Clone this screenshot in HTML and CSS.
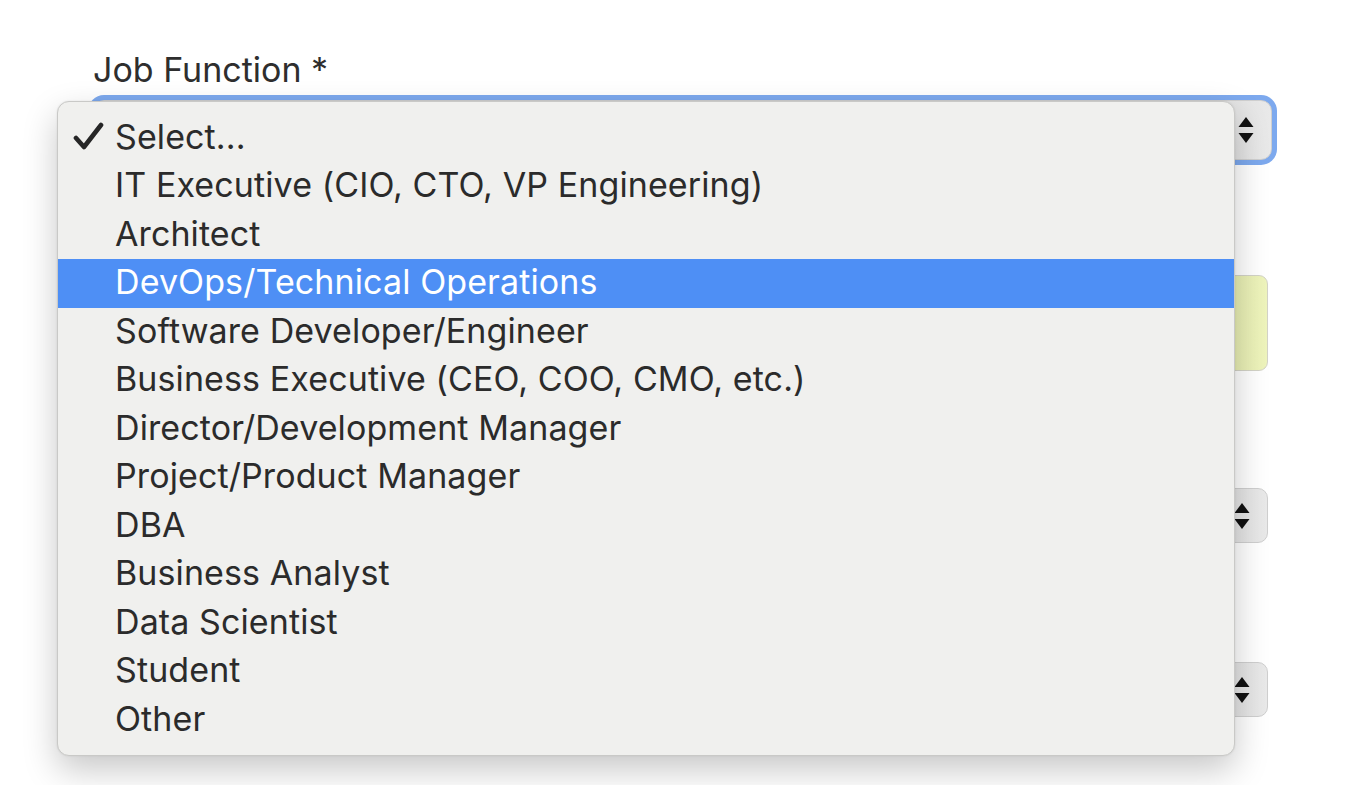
FILE: index.html
```html
<!DOCTYPE html>
<html lang="en">
<head>
<meta charset="utf-8">
<title>Job Function</title>
<link rel="stylesheet" href="styles.css">
</head>
<body>
<div class="page">
  <form class="form">
    <label class="label">Job Function *</label>
    <div class="focus-ring">
      <div class="select select-main"><span class="arrows"><svg width="16" height="28" viewBox="0 0 16 28"><polygon points="8,1 15.5,11 0.5,11" fill="#111"/><polygon points="0.5,17 15.5,17 8,27" fill="#111"/></svg></span></div>
    </div>
    <div class="input-yellow"></div>
    <div class="select select-small s1"><span class="arrows"><svg width="16" height="28" viewBox="0 0 16 28"><polygon points="8,1 15.5,11 0.5,11" fill="#111"/><polygon points="0.5,17 15.5,17 8,27" fill="#111"/></svg></span></div>
    <div class="select select-small s2"><span class="arrows"><svg width="16" height="28" viewBox="0 0 16 28"><polygon points="8,1 15.5,11 0.5,11" fill="#111"/><polygon points="0.5,17 15.5,17 8,27" fill="#111"/></svg></span></div>
    <p class="footnote">I would like to be kept informed about products and <a>events</a></p>
  </form>

  <ul class="menu">
    <li class="item checked"><svg class="check" width="32" height="32" viewBox="0 0 32 32"><polyline points="4,17 12,26 29,4" fill="none" stroke="#262626" stroke-width="4.6" stroke-linecap="round" stroke-linejoin="round"/></svg>Select...</li>
    <li class="item">IT Executive (CIO, CTO, VP Engineering)</li>
    <li class="item">Architect</li>
    <li class="item active">DevOps/Technical Operations</li>
    <li class="item">Software Developer/Engineer</li>
    <li class="item">Business Executive (CEO, COO, CMO, etc.)</li>
    <li class="item">Director/Development Manager</li>
    <li class="item">Project/Product Manager</li>
    <li class="item">DBA</li>
    <li class="item">Business Analyst</li>
    <li class="item">Data Scientist</li>
    <li class="item">Student</li>
    <li class="item">Other</li>
  </ul>
</div>
</body>
</html>
```

FILE: styles.css
```css
* { box-sizing: border-box; }
html, body {
  margin: 0;
  padding: 0;
  background: #ffffff;
  overflow: hidden;
}
body {
  width: 1358px;
  height: 785px;
  font-family: Inter, "Noto Sans", "Liberation Sans", sans-serif;
  color: #2a2a2a;
}
.page {
  position: relative;
  width: 1358px;
  height: 785px;
  overflow: hidden;
}
.form {
  display: flex;
  flex-direction: column;
  align-items: flex-start;
  padding: 50px 0 0 88px;
  width: 1277px;
}
.label {
  display: block;
  font-size: 34px;
  line-height: 40px;
  padding-left: 5px;
  color: #2e2e2e;
  margin-bottom: 5px;
}
.focus-ring {
  width: 1189px;
  height: 70px;
  padding: 5px;
  border-radius: 16px;
  background: #7da9ee;
}
.select {
  position: relative;
  border: 1.5px solid #cfcfcf;
  border-radius: 11px;
  background: linear-gradient(90deg, #f2f2f2 0%, #ececec 85%, #dedede 94%, #e9e9e9 100%);
}
.select-main {
  width: 100%;
  height: 100%;
}
.arrows {
  position: absolute;
  right: 17px;
  top: 50%;
  transform: translateY(-50%);
  display: flex;
}
.input-yellow {
  margin-top: 110px;
  width: 1180px;
  height: 96px;
  border: 1.5px solid #d3d3c7;
  border-radius: 9px;
  background: linear-gradient(90deg, #eef5b2 0%, #eef5b8 90%, #e6ecb0 96%, #eef4bc 100%);
}
.select-small {
  width: 1180px;
  height: 55px;
  border-radius: 10px;
}
.select-small .arrows { right: 17px; }
.s1 { margin-top: 117px; }
.s2 { margin-top: 119px; }
.footnote {
  margin: 62px 0 0 20px;
  font-size: 34px;
  line-height: 40px;
  color: #444;
  white-space: nowrap;
}
.footnote a { color: #5b55c8; }

.menu {
  position: absolute;
  left: 57px;
  top: 101px;
  width: 1178px;
  height: 655px;
  margin: 0;
  padding: 11.5px 0 0 0;
  list-style: none;
  background: #f0f0ee;
  border: 1px solid #c9c9c7;
  border-radius: 12px;
  box-shadow: 0 14px 34px rgba(0, 0, 0, 0.22), 0 0 2px rgba(0,0,0,0.1);
}
.item {
  position: relative;
  height: 48.5px;
  line-height: 46.5px;
  padding-left: 57px;
  font-size: 34px;
  letter-spacing: 0.1px;
  color: #2b2b2b;
  white-space: nowrap;
}
.item.active {
  background: #4e8ff5;
  color: #ffffff;
}
.check {
  position: absolute;
  left: 14px;
  top: 7px;
}
```
